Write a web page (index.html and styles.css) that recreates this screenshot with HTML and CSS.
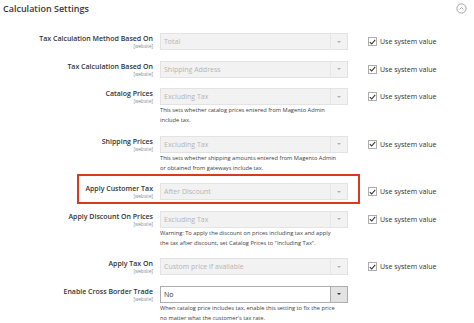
FILE: index.html
```html
<!DOCTYPE html>
<html lang="en">
<head>
    <meta charset="UTF-8">
    <title>Calculation Settings</title>
    <link rel="stylesheet" href="styles.css">
</head>
<body>
    <div class="section">
        <div class="section_head">
            <h2>Calculation Settings</h2>
            <span class="toggle">
                <svg width="11" height="11" viewBox="0 0 11 11"><circle cx="5.5" cy="5.5" r="4.6" fill="none" stroke="#9a9a9a" stroke-width="0.9"/><path d="M3.6 6.4 L5.5 4.5 L7.4 6.4" fill="none" stroke="#9a9a9a" stroke-width="0.9"/></svg>
            </span>
        </div>
        <div class="rows">
            <div class="row">
                <div class="label"><span class="name">Tax Calculation Method Based On</span><span class="scope">[website]</span></div>
                <div class="value"><div class="select disabled"><span>Total</span><i class="arrow"></i></div></div>
                <div class="use_default"><span class="chk"><svg width="7" height="6" viewBox="0 0 7 6"><path d="M0.8 3.2 L2.7 5 L6.2 0.9" fill="none" stroke="#333" stroke-width="1.1"/></svg></span>Use system value</div>
            </div>
            <div class="row">
                <div class="label"><span class="name">Tax Calculation Based On</span><span class="scope">[website]</span></div>
                <div class="value"><div class="select disabled"><span>Shipping Address</span><i class="arrow"></i></div></div>
                <div class="use_default"><span class="chk"><svg width="7" height="6" viewBox="0 0 7 6"><path d="M0.8 3.2 L2.7 5 L6.2 0.9" fill="none" stroke="#333" stroke-width="1.1"/></svg></span>Use system value</div>
            </div>
            <div class="row">
                <div class="label"><span class="name">Catalog Prices</span><span class="scope">[website]</span></div>
                <div class="value">
                    <div class="select disabled"><span>Excluding Tax</span><i class="arrow"></i></div>
                    <p class="note">This sets whether catalog prices entered from Magento Admin<br>include tax.</p>
                </div>
                <div class="use_default"><span class="chk"><svg width="7" height="6" viewBox="0 0 7 6"><path d="M0.8 3.2 L2.7 5 L6.2 0.9" fill="none" stroke="#333" stroke-width="1.1"/></svg></span>Use system value</div>
            </div>
            <div class="row">
                <div class="label"><span class="name">Shipping Prices</span><span class="scope">[website]</span></div>
                <div class="value">
                    <div class="select disabled"><span>Excluding Tax</span><i class="arrow"></i></div>
                    <p class="note">This sets whether shipping amounts entered from Magento Admin<br>or obtained from gateways include tax.</p>
                </div>
                <div class="use_default"><span class="chk"><svg width="7" height="6" viewBox="0 0 7 6"><path d="M0.8 3.2 L2.7 5 L6.2 0.9" fill="none" stroke="#333" stroke-width="1.1"/></svg></span>Use system value</div>
            </div>
            <div class="row">
                <div class="label"><span class="name">Apply Customer Tax</span><span class="scope">[website]</span></div>
                <div class="value"><div class="select disabled"><span>After Discount</span><i class="arrow"></i></div></div>
                <div class="use_default"><span class="chk"><svg width="7" height="6" viewBox="0 0 7 6"><path d="M0.8 3.2 L2.7 5 L6.2 0.9" fill="none" stroke="#333" stroke-width="1.1"/></svg></span>Use system value</div>
                <span class="highlight"></span>
            </div>
            <div class="row">
                <div class="label"><span class="name">Apply Discount On Prices</span><span class="scope">[website]</span></div>
                <div class="value">
                    <div class="select disabled"><span>Excluding Tax</span><i class="arrow"></i></div>
                    <p class="note">Warning: To apply the discount on prices including tax and apply<br>the tax after discount, set Catalog Prices to "Including Tax".</p>
                </div>
                <div class="use_default"><span class="chk"><svg width="7" height="6" viewBox="0 0 7 6"><path d="M0.8 3.2 L2.7 5 L6.2 0.9" fill="none" stroke="#333" stroke-width="1.1"/></svg></span>Use system value</div>
            </div>
            <div class="row">
                <div class="label"><span class="name">Apply Tax On</span><span class="scope">[website]</span></div>
                <div class="value"><div class="select disabled"><span>Custom price if available</span><i class="arrow"></i></div></div>
                <div class="use_default"><span class="chk"><svg width="7" height="6" viewBox="0 0 7 6"><path d="M0.8 3.2 L2.7 5 L6.2 0.9" fill="none" stroke="#333" stroke-width="1.1"/></svg></span>Use system value</div>
            </div>
            <div class="row">
                <div class="label"><span class="name">Enable Cross Border Trade</span><span class="scope">[website]</span></div>
                <div class="value">
                    <div class="select"><span>No</span><i class="arrow"></i></div>
                    <p class="note">When catalog price includes tax, enable this setting to fix the price<br>no matter what the customer's tax rate.</p>
                </div>
                <div class="use_default"></div>
            </div>
        </div>
    </div>
</body>
</html>
```

FILE: styles.css
```css
*{
    margin:0;
    padding:0;
    box-sizing: border-box;
}
body{
    width: 474px;
    height: 323px;
    overflow: hidden;
    background-color: white;
    font-family: "Open Sans", "Liberation Sans", sans-serif;
    color: #303030;
}
.section_head{
    display: flex;
    justify-content: space-between;
    align-items: center;
    height: 16px;
    padding: 1px 7px 0 3px;
}
.section_head h2{
    font-size: 9px;
    font-weight: 600;
    color: #41362f;
}
.toggle{
    display: flex;
    margin-top: -1px;
}
.rows{
    padding-top: 17px;
}
.row{
    position: relative;
    display: grid;
    grid-template-columns: 160px 188px auto;
    margin-bottom: 10.5px;
}
.label{
    display: flex;
    flex-direction: column;
    align-items: flex-end;
    padding-right: 7px;
    padding-top: 1px;
}
.name{
    font-size: 7px;
    font-weight: 600;
    line-height: 9px;
    white-space: nowrap;
    color: #333;
}
.scope{
    font-size: 4.6px;
    line-height: 6px;
    color: #888;
}
.select{
    display: flex;
    align-items: center;
    justify-content: space-between;
    height: 17px;
    border: 1px solid #adadad;
    background-color: white;
    font-size: 7px;
    color: #303030;
}
.select span{
    padding-left: 3px;
}
.select .arrow{
    display: flex;
    align-items: center;
    justify-content: center;
    width: 17px;
    height: 100%;
    background-color: #e3e3e3;
    border-left: 1px solid #adadad;
}
.select .arrow::after{
    content: "";
    border-left: 2px solid transparent;
    border-right: 2px solid transparent;
    border-top: 2.5px solid #41362f;
}
.select.disabled{
    border-color: #e3e3e3;
    background-color: #f2f2f2;
    color: #b5b5b5;
}
.select.disabled .arrow{
    background-color: #f2f2f2;
    border-left-color: #e6e6e6;
}
.select.disabled .arrow::after{
    border-top-color: #b0b0b0;
}
.note{
    font-size: 5.7px;
    line-height: 10px;
    white-space: nowrap;
    color: #404040;
}
.use_default{
    display: flex;
    align-items: flex-start;
    padding-left: 20px;
    padding-top: 4px;
    font-size: 7px;
    line-height: 9px;
    white-space: nowrap;
}
.chk{
    display: flex;
    align-items: center;
    justify-content: center;
    width: 9px;
    height: 9px;
    margin-right: 3px;
    border: 1px solid #adadad;
    background-color: white;
}
.highlight{
    position: absolute;
    left: 77px;
    top: -9px;
    width: 283px;
    height: 30px;
    border: 2px solid #d9391d;
    pointer-events: none;
}
```
